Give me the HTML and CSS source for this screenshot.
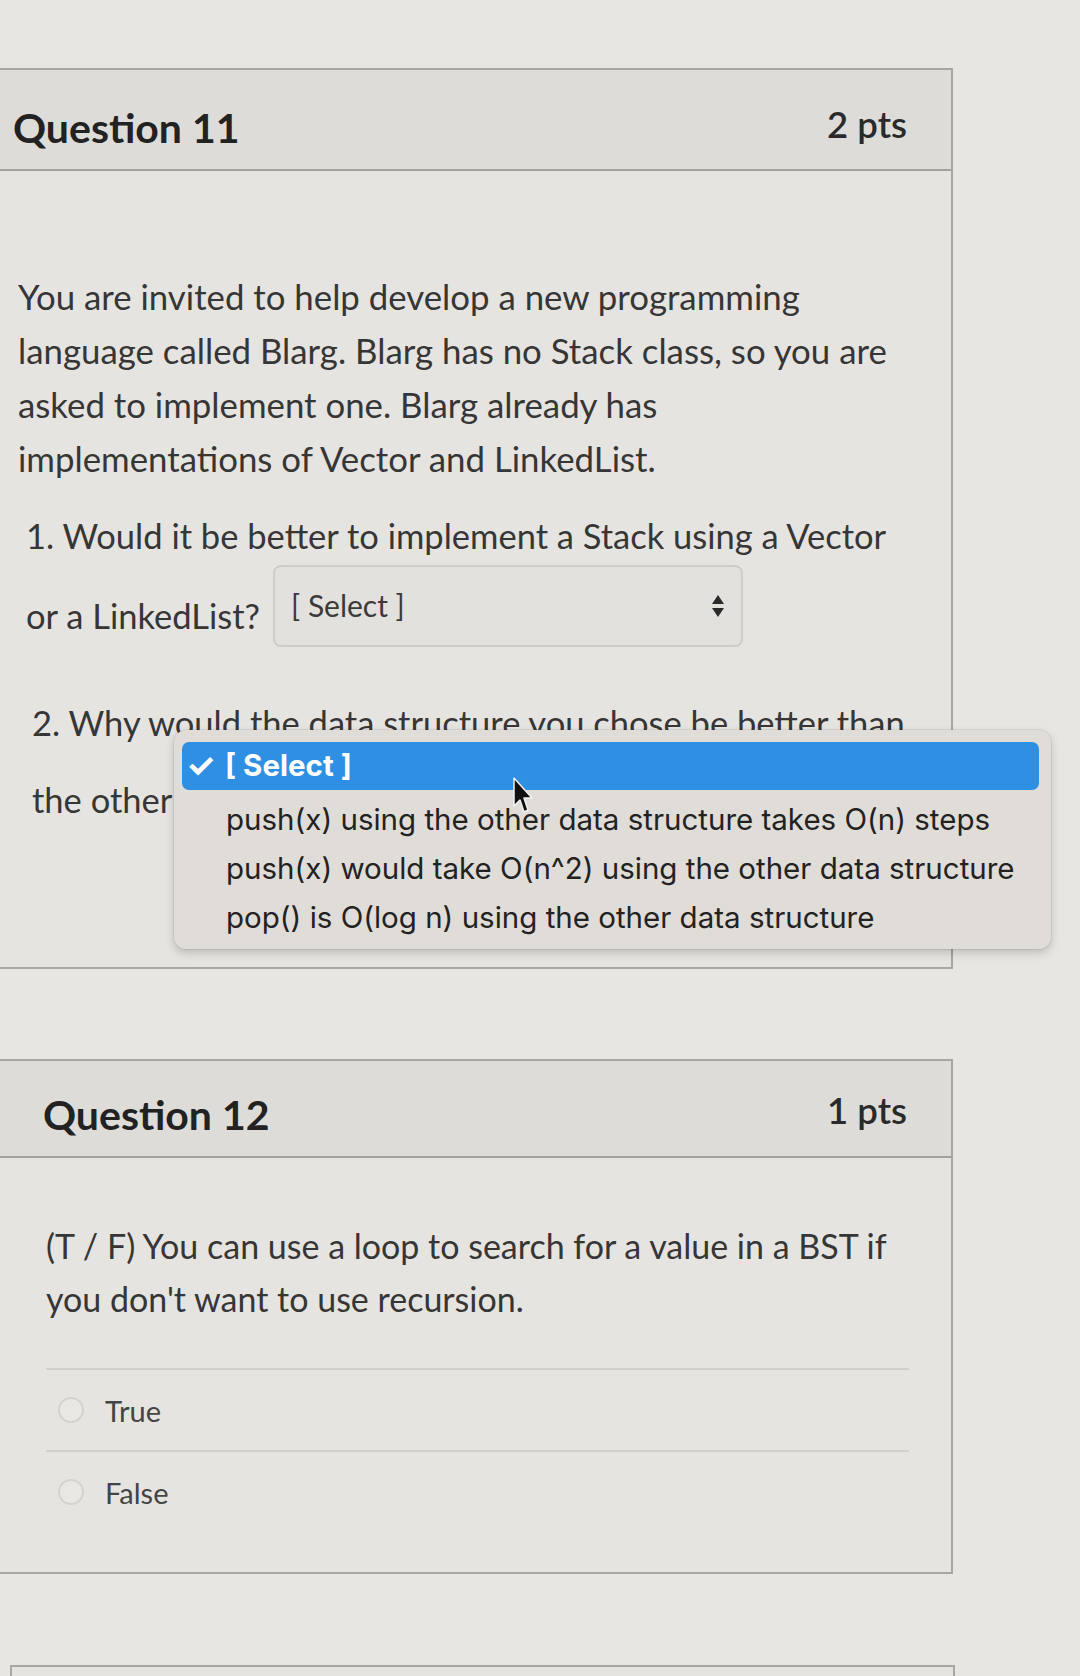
FILE: index.html
```html
<!DOCTYPE html>
<html>
<head>
<meta charset="utf-8">
<link rel="stylesheet" href="styles.css">
</head>
<body>
<div class="page">
  <section class="question q11">
    <header class="qhead">
      <span class="qtitle">Question 11</span>
      <span class="qpts">2 pts</span>
    </header>
    <div class="qbody">
      <p class="intro">You are invited to help develop a new programming<br>language called Blarg. Blarg has no Stack class, so you are<br>asked to implement one. Blarg already has<br>implementations of Vector and LinkedList.</p>
      <div class="part part1">
        <div class="line1">1. Would it be better to implement a Stack using a Vector</div>
        <div class="line2">
          <span class="label">or a LinkedList?</span>
          <span class="select"><span class="select-text">[ Select ]</span><svg class="arrows" width="14" height="26" viewBox="0 0 14 26"><path d="M7 2 L13 11 L1 11 Z" fill="#2a2a2a"/><path d="M7 24 L13 15 L1 15 Z" fill="#2a2a2a"/></svg></span>
        </div>
      </div>
      <div class="part2-wrap">
        <p class="part part2">2. Why would the data structure you chose be better than<br>the other</p>
        <div class="menu">
          <div class="opt selected"><span class="check">✓</span>[ Select ]</div>
          <div class="opt">push(x) using the other data structure takes O(n) steps</div>
          <div class="opt">push(x) would take O(n^2) using the other data structure</div>
          <div class="opt">pop() is O(log n) using the other data structure</div>
          <svg class="cursor" width="22" height="44" viewBox="0 0 22 44"><path d="M2 2 L2 30 L8 24 L12 36 L16 34 L12 22 L20 22 Z" fill="#111" stroke="#f2f2f2" stroke-width="1.5" stroke-linejoin="round"/></svg>
        </div>
      </div>
    </div>
  </section>

  <section class="question q12">
    <header class="qhead">
      <span class="qtitle">Question 12</span>
      <span class="qpts">1 pts</span>
    </header>
    <div class="qbody">
      <p class="intro">(T / F) You can use a loop to search for a value in a BST if you don't want to use recursion.</p>
      <div class="answers">
        <label class="answer"><span class="radio"></span>True</label>
        <label class="answer"><span class="radio"></span>False</label>
      </div>
    </div>
  </section>

  <section class="question q13"></section>
</div>
</body>
</html>
```
FILE: styles.css
```css
html, body {
  margin: 0;
  padding: 0;
}
body {
  background: #e8e6e2;
  font-family: Lato, "Open Sans", sans-serif;
  color: #333333;
  width: 1080px;
  height: 1676px;
  overflow: hidden;
}
.page {
  padding-top: 68px;
}
.question {
  width: 953px;
  border: 2px solid #a8a6a2;
  border-left: none;
  background: #e6e4e0;
  box-sizing: border-box;
}
.qhead {
  display: flex;
  justify-content: space-between;
  align-items: center;
  background: #dedcd8;
  border-bottom: 2px solid #a3a19d;
  box-sizing: border-box;
}
.qtitle {
  font-weight: 700;
  font-size: 41px;
  color: #222;
}
.qpts {
  font-weight: 600;
  font-size: 36.5px;
  color: #2a2a2a;
}
.q11 .qhead {
  height: 101px;
  padding: 0 44px 0 13px;
}
.q11 .qtitle {
  padding-top: 16px;
}
.q11 .qpts {
  padding-top: 8px;
}
.q11 .qbody {
  padding: 99px 20px 0 18px;
  height: 796px;
  box-sizing: border-box;
}
.intro {
  margin: 0;
  font-size: 34.8px;
  line-height: 54px;
  color: #363636;
  white-space: nowrap;
}
.part {
  margin: 0;
  font-size: 34.5px;
  color: #363636;
  white-space: nowrap;
}
.part1 {
  padding-left: 8px;
}
.line1 {
  line-height: 54px;
  margin-top: 23px;
}
.line2 {
  display: flex;
  align-items: flex-start;
  margin-top: 2px;
}
.label {
  line-height: 54px;
  margin-top: 24px;
}
.select {
  display: flex;
  align-items: center;
  justify-content: space-between;
  width: 470px;
  height: 82px;
  margin-left: 13px;
  padding: 0 16px 0 16px;
  box-sizing: border-box;
  border: 2px solid #cfcdc9;
  border-radius: 8px;
  background: #e3e1dd;
  font-size: 30px;
  color: #3a3a3a;
}
.select-text {
  margin-top: -2px;
}
.part2-wrap {
  position: relative;
  margin-top: 37px;
}
.part2 {
  padding-left: 14px;
  line-height: 77px;
}
.menu {
  position: absolute;
  left: 156px;
  top: 46px;
  width: 877px;
  height: 219px;
  padding: 12px 12px 0 8px;
  box-sizing: border-box;
  background: #e0dcd8;
  border-radius: 12px;
  box-shadow: 0 4px 10px rgba(0,0,0,0.18), 0 0 0 1px rgba(0,0,0,0.06);
  font-family: Inter, "Liberation Sans", sans-serif;
  font-size: 29.5px;
  font-weight: 400;
  color: #222;
}
.opt {
  height: 49px;
  line-height: 50px;
  padding-left: 44px;
  white-space: nowrap;
}
.opt.selected {
  position: relative;
  height: 48px;
  line-height: 46px;
  background: #2f8fe2;
  border-radius: 7px;
  color: #fff;
  font-weight: 700;
  padding-left: 43px;
  margin-bottom: 4px;
}
.check {
  position: absolute;
  left: 4px;
  top: 0;
  font-size: 33px;
}
.cursor {
  position: absolute;
  left: 338px;
  top: 46px;
}
.q12 {
  margin-top: 90px;
}
.q12 .qhead {
  height: 97px;
  padding: 0 44px 0 43px;
}
.q12 .qtitle {
  padding-top: 12px;
}
.q12 .qpts {
  padding-top: 2px;
}
.q12 .qbody {
  padding: 61px 42px 0 46px;
  height: 414px;
  box-sizing: border-box;
}
.q12 .intro {
  font-size: 34px;
  line-height: 53px;
  white-space: normal;
}
.answers {
  margin-top: 43px;
}
.answer {
  display: flex;
  align-items: center;
  height: 82px;
  border-top: 2px solid #d2d0cc;
  font-size: 29px;
  color: #444;
  padding-left: 12px;
  box-sizing: border-box;
}
.radio {
  width: 22px;
  height: 22px;
  border: 2px solid #d4d2ce;
  border-radius: 50%;
  background: #e9e7e3;
  margin-right: 21px;
  flex: none;
}
.q13 {
  margin-top: 91px;
  margin-left: 10px;
  width: 945px;
  height: 40px;
  border-left: 2px solid #a8a6a2;
  border-bottom: none;
}
```
